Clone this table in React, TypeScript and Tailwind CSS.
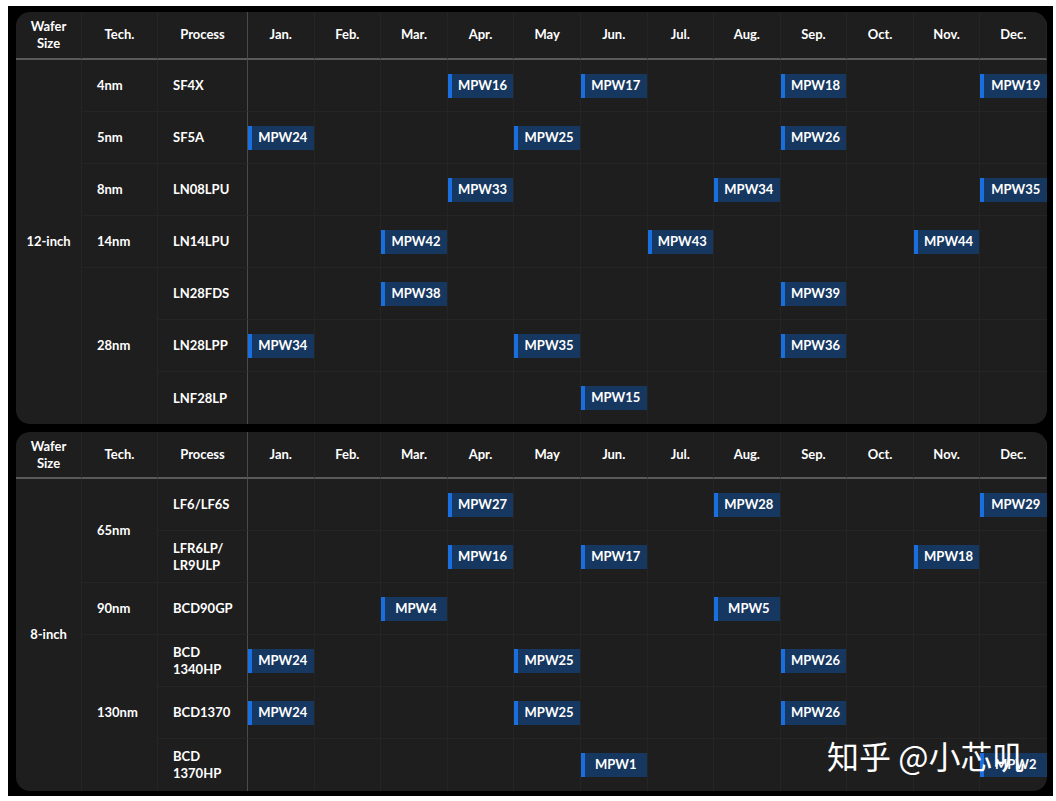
import React from 'react';

type Row = { process: string; mpw: Record<number, string> };
type Group = { tech: string; rows: Row[] };
type Table = { size: string; groups: Group[] };

const months = ['Jan.', 'Feb.', 'Mar.', 'Apr.', 'May', 'Jun.', 'Jul.', 'Aug.', 'Sep.', 'Oct.', 'Nov.', 'Dec.'];

const inch12: Table = {
  size: '12-inch',
  groups: [
    { tech: '4nm', rows: [{ process: 'SF4X', mpw: { 3: 'MPW16', 5: 'MPW17', 8: 'MPW18', 11: 'MPW19' } }] },
    { tech: '5nm', rows: [{ process: 'SF5A', mpw: { 0: 'MPW24', 4: 'MPW25', 8: 'MPW26' } }] },
    { tech: '8nm', rows: [{ process: 'LN08LPU', mpw: { 3: 'MPW33', 7: 'MPW34', 11: 'MPW35' } }] },
    { tech: '14nm', rows: [{ process: 'LN14LPU', mpw: { 2: 'MPW42', 6: 'MPW43', 10: 'MPW44' } }] },
    {
      tech: '28nm',
      rows: [
        { process: 'LN28FDS', mpw: { 2: 'MPW38', 8: 'MPW39' } },
        { process: 'LN28LPP', mpw: { 0: 'MPW34', 4: 'MPW35', 8: 'MPW36' } },
        { process: 'LNF28LP', mpw: { 5: 'MPW15' } },
      ],
    },
  ],
};

const inch8: Table = {
  size: '8-inch',
  groups: [
    {
      tech: '65nm',
      rows: [
        { process: 'LF6/LF6S', mpw: { 3: 'MPW27', 7: 'MPW28', 11: 'MPW29' } },
        { process: 'LFR6LP/ LR9ULP', mpw: { 3: 'MPW16', 5: 'MPW17', 10: 'MPW18' } },
      ],
    },
    { tech: '90nm', rows: [{ process: 'BCD90GP', mpw: { 2: 'MPW4', 7: 'MPW5' } }] },
    {
      tech: '130nm',
      rows: [
        { process: 'BCD 1340HP', mpw: { 0: 'MPW24', 4: 'MPW25', 8: 'MPW26' } },
        { process: 'BCD1370', mpw: { 0: 'MPW24', 4: 'MPW25', 8: 'MPW26' } },
        { process: 'BCD 1370HP', mpw: { 5: 'MPW1', 11: 'MPW2' } },
      ],
    },
  ],
};

const spans: Record<number, string> = {
  1: 'row-span-1',
  2: 'row-span-2',
  3: 'row-span-3',
  6: 'row-span-6',
  7: 'row-span-7',
};

const line = 'border-[#252526]';

function Badge({ label }: { label: string }) {
  return (
    <div className="flex h-6 w-full">
      <div className="w-1 bg-[#1a6fe0]" />
      <div className="flex flex-1 items-center justify-center bg-[#16375f] text-white">
        {label}
      </div>
    </div>
  );
}

function MpwTable({ table, header, className }: { table: Table; header: string; className: string }) {
  const total = table.groups.reduce((n, g) => n + g.rows.length, 0);
  return (
    <div className={`rounded-[14px] overflow-hidden bg-[#1e1e1f] ${className}`}>
      <div className={`grid grid-cols-[66px_76px_90px_repeat(12,minmax(0,1fr))] ${header}`}>
        <div className={`flex flex-col items-center justify-center border-b-2 border-b-[#5a5a5a] border-r ${line} leading-[17px]`}>
          <span>Wafer</span>
          <span>Size</span>
        </div>
        <div className={`flex items-center justify-center border-b-2 border-b-[#5a5a5a] border-r ${line}`}>Tech.</div>
        <div className="flex items-center justify-center border-b-2 border-b-[#5a5a5a] border-r border-r-[#4a4a4a]">Process</div>
        {months.map((m) => (
          <div key={m} className={`flex items-center justify-center border-b-2 border-b-[#5a5a5a] border-r ${line} last:border-r-0`}>
            {m}
          </div>
        ))}

        <div className={`col-start-1 ${spans[total]} flex items-center justify-center border-r ${line}`}>{table.size}</div>
        {table.groups.map((g, gi) => (
          <React.Fragment key={g.tech}>
            <div
              className={`col-start-2 ${spans[g.rows.length]} flex items-center pl-[15px] border-r ${line} ${gi < table.groups.length - 1 ? 'border-b' : ''}`}
            >
              {g.tech}
            </div>
            {g.rows.map((r, ri) => {
              const last = gi === table.groups.length - 1 && ri === g.rows.length - 1;
              return (
                <React.Fragment key={r.process}>
                  <div
                    className={`col-start-3 flex items-center pl-[15px] pr-2 leading-[17px] border-r border-r-[#4a4a4a] ${last ? '' : `border-b ${line}`}`}
                  >
                    <span className="w-[58px]">{r.process}</span>
                  </div>
                  {months.map((m, mi) => (
                    <div
                      key={m}
                      className={`flex items-center ${mi < 11 ? `border-r ${line}` : ''} ${last ? '' : `border-b ${line}`}`}
                    >
                      {r.mpw[mi] && <Badge label={r.mpw[mi]} />}
                    </div>
                  ))}
                </React.Fragment>
              );
            })}
          </React.Fragment>
        ))}
      </div>
    </div>
  );
}

export default function App() {
  return (
    <div
      className="relative w-[1056px] h-[801px] bg-white pl-2 pt-[6px] text-[13px] font-bold text-white"
      style={{ fontFamily: 'Lato, "Noto Sans", sans-serif' }}
    >
      <div className="flex h-[790px] w-[1045px] flex-col gap-2 bg-black pl-2 pr-[6px] pt-[6px]">
        <MpwTable table={inch12} header="grid-rows-[48px_repeat(7,52px)]" className="h-[412px]" />
        <MpwTable table={inch8} header="grid-rows-[47px_repeat(6,52px)]" className="h-[359px]" />
      </div>
      <div
        className="absolute left-[827px] top-[735px] text-[32px] font-normal leading-[40px] text-white"
        style={{ fontFamily: '"Noto Sans CJK SC", sans-serif' }}
      >
        知乎 @小芯叽
      </div>
    </div>
  );
}
